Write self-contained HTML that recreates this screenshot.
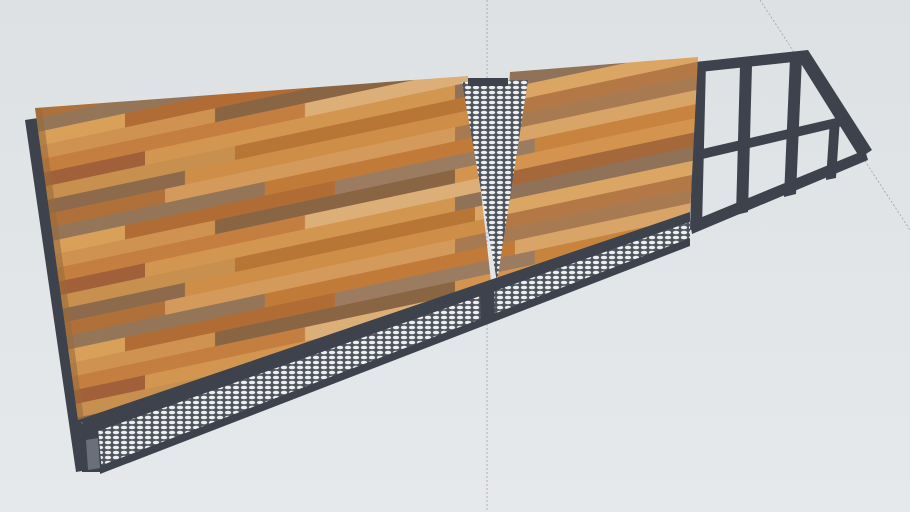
<!DOCTYPE html>
<html><head><style>
html,body{margin:0;padding:0;width:910px;height:512px;overflow:hidden;background:#e1e5e8}
</style></head><body>
<svg width="910" height="512" viewBox="0 0 910 512" xmlns="http://www.w3.org/2000/svg">
<defs>
<linearGradient id="bg" x1="0" y1="0" x2="0" y2="1"><stop offset="0" stop-color="#dde1e4"/><stop offset="1" stop-color="#e6e9eb"/></linearGradient>
<pattern id="wood" x="35" width="680" height="112" patternUnits="userSpaceOnUse" patternTransform="skewY(-12)">
<rect width="680" height="112" fill="#c98a45"/>
<rect x="0" y="0" width="130" height="14" fill="#b0703a"/><rect x="130" y="0" width="290" height="14" fill="#d49a5c"/><rect x="420" y="0" width="260" height="14" fill="#a87a52"/>
<rect x="0" y="14" width="230" height="14" fill="#957558"/><rect x="230" y="14" width="250" height="14" fill="#c27a38"/><rect x="480" y="14" width="200" height="14" fill="#d8a468"/>
<rect x="0" y="28" width="90" height="14" fill="#d9a05a"/><rect x="90" y="28" width="210" height="14" fill="#b06c34"/><rect x="300" y="28" width="200" height="14" fill="#9c7c60"/><rect x="500" y="28" width="180" height="14" fill="#c8843e"/>
<rect x="0" y="42" width="180" height="14" fill="#cf9250"/><rect x="180" y="42" width="240" height="14" fill="#8a6544"/><rect x="420" y="42" width="260" height="14" fill="#d49450"/>
<rect x="0" y="56" width="270" height="14" fill="#c47e40"/><rect x="270" y="56" width="200" height="14" fill="#dcae78"/><rect x="470" y="56" width="210" height="14" fill="#a5683a"/>
<rect x="0" y="70" width="110" height="14" fill="#a2603a"/><rect x="110" y="70" width="310" height="14" fill="#d39650"/><rect x="420" y="70" width="260" height="14" fill="#8f7258"/>
<rect x="0" y="84" width="200" height="14" fill="#c8904e"/><rect x="200" y="84" width="240" height="14" fill="#b87636"/><rect x="440" y="84" width="240" height="14" fill="#dba664"/>
<rect x="0" y="98" width="150" height="14" fill="#8e6a4c"/><rect x="150" y="98" width="300" height="14" fill="#cf8e48"/><rect x="450" y="98" width="230" height="14" fill="#b47846"/>
</pattern>
<pattern id="mesh" width="8" height="5" patternUnits="userSpaceOnUse">
<rect width="8" height="5" fill="#50545c"/><ellipse cx="4" cy="2.5" rx="3.2" ry="1.8" fill="#eceef0"/>
</pattern>
</defs>
<rect width="910" height="512" fill="url(#bg)"/>
<line x1="487" y1="0" x2="487" y2="512" stroke="#999" stroke-width="0.7" stroke-dasharray="2,2"/>
<line x1="760" y1="0" x2="910" y2="230" stroke="#999" stroke-width="0.7" stroke-dasharray="2,2"/>
<g fill="#3d424d">
<polygon points="695,62 808,50 812,60 700,72"/>
<polygon points="808,50 872,150 860,158 800,62"/>
<polygon points="690,222 865,150 868,160 692,234"/>
<polygon points="695,62 706,62 702,228 690,230"/>
<polygon points="740,66 752,65 748,212 736,215"/>
<polygon points="790,58 802,57 796,194 784,197"/>
<polygon points="830,120 840,118 836,178 826,180"/>
<polygon points="698,150 845,116 847,125 698,160"/>
</g>
<polygon points="25,120 38,118 88,470 76,472" fill="#3d424d"/>
<polygon points="35,108 468,76 492,290 78,420" fill="url(#wood)"/>
<polygon points="510,72 698,57 690,215 497,282" fill="url(#wood)"/>
<polygon points="35,108 42,108 84,420 78,420" fill="#9a6a3a" opacity="0.6"/>
<polygon points="462,82 528,80 497,282" fill="url(#mesh)"/>
<rect x="468" y="78" width="40" height="8" fill="#3d424d"/>
<polygon points="95,430 690,222 690,242 100,468" fill="url(#mesh)"/>
<polygon points="78,420 690,212 690,222 95,432" fill="#3d424d"/>
<polygon points="100,466 690,238 690,246 100,474" fill="#3d424d"/>
<polygon points="78,422 98,428 102,472 82,472" fill="#3d424d"/>
<polygon points="86,440 98,438 100,468 88,470" fill="#6a707a"/>
<polygon points="480,288 494,284 495,318 481,322" fill="#3d424d"/>
</svg>
</body></html>
